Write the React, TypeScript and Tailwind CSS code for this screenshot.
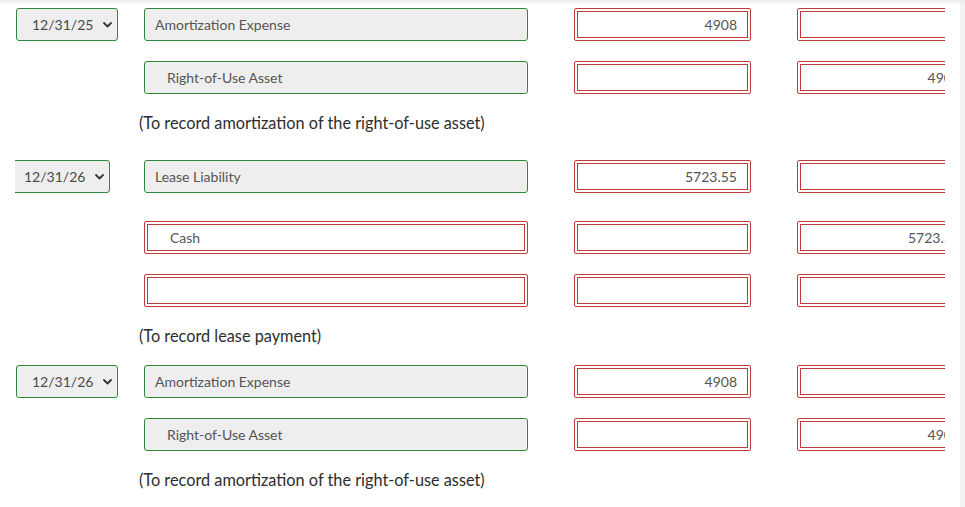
import React from "react";

const FONT = { fontFamily: "Lato, 'Noto Sans', 'Liberation Sans', sans-serif" };

function Chevron() {
  return (
    <svg width="9" height="6" viewBox="0 0 9 6" className="shrink-0">
      <path d="M1 1 L4.5 4.5 L8 1" fill="none" stroke="#333" strokeWidth="1.8" strokeLinecap="round" strokeLinejoin="round" />
    </svg>
  );
}

function DateSelect({ value, clipped }: { value: string; clipped?: boolean }) {
  if (clipped) {
    return (
      <div className="ml-[15px] w-[95px] h-[33px] overflow-hidden">
        <div className="-ml-[7px] w-[102px] h-[33px] flex items-center justify-between pl-[15px] pr-[5px] bg-[#eeeeee] border border-[#2f8a3c] rounded-[3px] text-[14px] text-[#4a4a4a]">
          <span>{value}</span>
          <Chevron />
        </div>
      </div>
    );
  }
  return (
    <div className="ml-[16px] w-[102px] h-[33px] flex items-center justify-between pl-[15px] pr-[5px] bg-[#eeeeee] border border-[#2f8a3c] rounded-[3px] text-[14px] text-[#4a4a4a]">
      <span>{value}</span>
      <Chevron />
    </div>
  );
}

function GreenField({ text, indent }: { text: string; indent?: boolean }) {
  return (
    <div
      className={
        "w-[384px] h-[33px] flex items-center bg-[#eeeeee] border border-[#2f8a3c] rounded-[3px] text-[14px] text-[#555] " +
        (indent ? "pl-[22px]" : "pl-[10px]")
      }
    >
      {text}
    </div>
  );
}

function RedBox({ text, right, indent, width }: { text?: string; right?: boolean; indent?: boolean; width: string }) {
  return (
    <div className={width + " h-[33px] shrink-0 border border-[#c23a3a] rounded-[2px] p-[2px]"}>
      <div
        className={
          "h-full border border-[#c23a3a] flex items-center text-[14px] text-[#555] " +
          (right ? "justify-end pr-[10px]" : indent ? "pl-[22px]" : "pl-[8px]")
        }
      >
        {text}
      </div>
    </div>
  );
}

function Row({
  date,
  clipped,
  account,
  indent,
  redAccount,
  debit,
  credit,
  className,
}: {
  date?: string;
  clipped?: boolean;
  account?: string;
  indent?: boolean;
  redAccount?: boolean;
  debit?: string;
  credit?: string;
  className?: string;
}) {
  return (
    <div className={"flex items-center h-[33px] " + (className || "")}>
      <div className="w-[144px] shrink-0">{date ? <DateSelect value={date} clipped={clipped} /> : null}</div>
      <div className="w-[384px] shrink-0">
        {redAccount ? (
          <RedBox width="w-[384px]" text={account} indent={indent} />
        ) : (
          <GreenField text={account || ""} indent={indent} />
        )}
      </div>
      <div className="w-[46px] shrink-0" />
      <RedBox width="w-[177px]" text={debit} right />
      <div className="w-[46px] shrink-0" />
      <RedBox width="w-[177px]" text={credit} right />
    </div>
  );
}

function Note({ text, className }: { text: string; className?: string }) {
  return <div className={"pl-[139px] text-[16.3px] leading-[24px] text-[#2d2d2d] " + (className || "")}>{text}</div>;
}

export default function App() {
  return (
    <div className="relative w-[965px] h-[507px] bg-white flex overflow-hidden" style={FONT}>
      <div className="w-[945px] h-full overflow-hidden">
        <div className="w-[1000px] flex flex-col pt-[8px]">
          <Row date="12/31/25" account="Amortization Expense" debit="4908" />
          <Row className="mt-[20px]" account="Right-of-Use Asset" indent credit="4908" />
          <Note className="mt-[17px]" text="(To record amortization of the right-of-use asset)" />
          <Row className="mt-[25px]" date="12/31/26" clipped account="Lease Liability" debit="5723.55" />
          <Row className="mt-[28px]" account="Cash" indent redAccount credit="5723.55" />
          <Row className="mt-[20px]" account="" redAccount />
          <Note className="mt-[17px]" text="(To record lease payment)" />
          <Row className="mt-[17px]" date="12/31/26" account="Amortization Expense" debit="4908" />
          <Row className="mt-[20px]" account="Right-of-Use Asset" indent credit="4908" />
          <Note className="mt-[17px]" text="(To record amortization of the right-of-use asset)" />
        </div>
      </div>
      <div className="w-[15px] h-full bg-white" />
      <div className="w-[5px] h-full bg-[#f3f3f3]" />
      <div className="absolute top-0 left-0 right-0 h-[5px] bg-gradient-to-b from-[#ebebeb] to-transparent pointer-events-none" />
    </div>
  );
}
